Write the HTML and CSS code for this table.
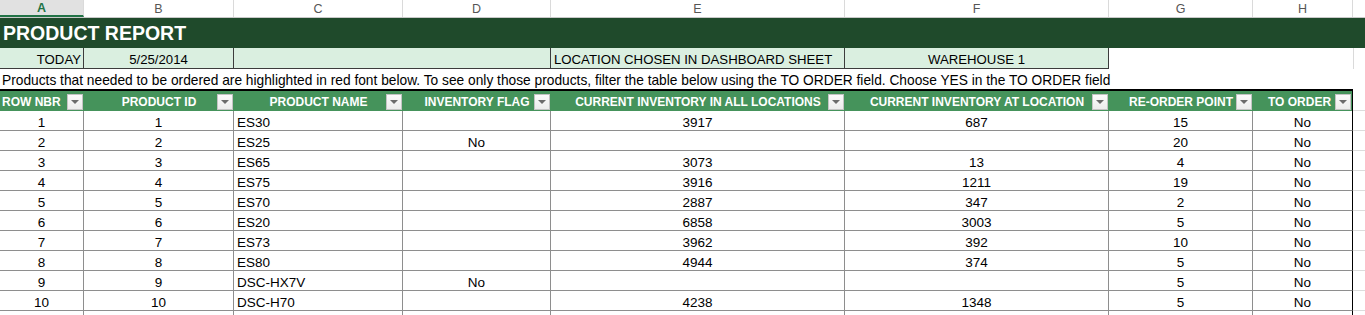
FILE: index.html
```html
<!DOCTYPE html>
<html>
<head>
<meta charset="utf-8">
<link rel="stylesheet" href="styles.css">
</head>
<body>
<div class="sheet">
  <div class="row colhead">
    <div class="ch sel">A</div><div class="ch">B</div><div class="ch">C</div><div class="ch">D</div><div class="ch">E</div><div class="ch">F</div><div class="ch">G</div><div class="ch">H</div><div class="ch gut"></div>
  </div>
  <div class="title">PRODUCT REPORT</div>
  <div class="row info">
    <div class="ic right">TODAY</div>
    <div class="ic center">5/25/2014</div>
    <div class="ic span2"></div>
    <div class="ic left">LOCATION CHOSEN IN DASHBOARD SHEET</div>
    <div class="ic center">WAREHOUSE 1</div>
    <div class="blank"></div><div class="blank"></div><div class="blank gutline"></div>
  </div>
  <div class="note">Products that needed to be ordered are highlighted in red font below. To see only those products, filter the table below using the TO ORDER field. Choose YES in the TO ORDER field</div>
  <div class="row thead">
    <div class="th first">ROW NBR<span class="fb"></span></div>
    <div class="th">PRODUCT ID<span class="fb"></span></div>
    <div class="th">PRODUCT NAME<span class="fb"></span></div>
    <div class="th">INVENTORY FLAG<span class="fb"></span></div>
    <div class="th">CURRENT INVENTORY IN ALL LOCATIONS<span class="fb"></span></div>
    <div class="th">CURRENT INVENTORY AT LOCATION<span class="fb"></span></div>
    <div class="th">RE-ORDER POINT<span class="fb"></span></div>
    <div class="th last">TO ORDER<span class="fb"></span></div>
    <div class="gc"></div>
  </div>
  <div class="row tr"><div class="td">1</div><div class="td">1</div><div class="td l">ES30</div><div class="td"></div><div class="td">3917</div><div class="td">687</div><div class="td">15</div><div class="td last">No</div><div class="gc"></div></div>
  <div class="row tr"><div class="td">2</div><div class="td">2</div><div class="td l">ES25</div><div class="td">No</div><div class="td"></div><div class="td"></div><div class="td">20</div><div class="td last">No</div><div class="gc"></div></div>
  <div class="row tr"><div class="td">3</div><div class="td">3</div><div class="td l">ES65</div><div class="td"></div><div class="td">3073</div><div class="td">13</div><div class="td">4</div><div class="td last">No</div><div class="gc"></div></div>
  <div class="row tr"><div class="td">4</div><div class="td">4</div><div class="td l">ES75</div><div class="td"></div><div class="td">3916</div><div class="td">1211</div><div class="td">19</div><div class="td last">No</div><div class="gc"></div></div>
  <div class="row tr"><div class="td">5</div><div class="td">5</div><div class="td l">ES70</div><div class="td"></div><div class="td">2887</div><div class="td">347</div><div class="td">2</div><div class="td last">No</div><div class="gc"></div></div>
  <div class="row tr"><div class="td">6</div><div class="td">6</div><div class="td l">ES20</div><div class="td"></div><div class="td">6858</div><div class="td">3003</div><div class="td">5</div><div class="td last">No</div><div class="gc"></div></div>
  <div class="row tr"><div class="td">7</div><div class="td">7</div><div class="td l">ES73</div><div class="td"></div><div class="td">3962</div><div class="td">392</div><div class="td">10</div><div class="td last">No</div><div class="gc"></div></div>
  <div class="row tr"><div class="td">8</div><div class="td">8</div><div class="td l">ES80</div><div class="td"></div><div class="td">4944</div><div class="td">374</div><div class="td">5</div><div class="td last">No</div><div class="gc"></div></div>
  <div class="row tr"><div class="td">9</div><div class="td">9</div><div class="td l">DSC-HX7V</div><div class="td">No</div><div class="td"></div><div class="td"></div><div class="td">5</div><div class="td last">No</div><div class="gc"></div></div>
  <div class="row tr"><div class="td">10</div><div class="td">10</div><div class="td l">DSC-H70</div><div class="td"></div><div class="td">4238</div><div class="td">1348</div><div class="td">5</div><div class="td last">No</div><div class="gc"></div></div>
  <div class="row tr"><div class="td"></div><div class="td"></div><div class="td l"></div><div class="td"></div><div class="td"></div><div class="td"></div><div class="td"></div><div class="td last"></div><div class="gc"></div></div>
</div>
</body>
</html>
```
FILE: styles.css
```css
html, body {
  margin: 0;
  padding: 0;
  background: #fff;
}
body {
  font-family: "Liberation Sans", Arial, sans-serif;
  font-size: 13px;
  color: #000;
  width: 1365px;
  height: 315px;
  overflow: hidden;
}
.sheet {
  width: 1365px;
}
.row {
  display: grid;
  grid-template-columns: 84px 150px 169px 148px 294px 264px 144px 100px 1fr;
}
.colhead {
  height: 18px;
  box-sizing: border-box;
  border-bottom: 1px solid #c9c9c9;
}
.ch {
  box-sizing: border-box;
  border-right: 1px solid #dadada;
  display: flex;
  align-items: center;
  justify-content: center;
  font-size: 12.5px;
  color: #555;
}
.ch.sel {
  background: #e1e1e1;
  color: #217346;
  font-weight: bold;
  border-bottom: 2px solid #217346;
}
.ch.gut {
  border-right: none;
}
.title {
  height: 30px;
  background: #1f4a2b;
  color: #fff;
  font-weight: bold;
  font-size: 19.5px;
  padding-left: 3px;
  padding-top: 1px;
  box-sizing: border-box;
  display: flex;
  align-items: center;
}
.info {
  height: 21px;
}
.ic {
  box-sizing: border-box;
  background: #daefe0;
  border-right: 1px solid #3c3c3c;
  border-bottom: 1px solid #3c3c3c;
  display: flex;
  align-items: center;
  white-space: nowrap;
  padding-top: 2px;
  font-size: 13.2px;
}
.ic.right {
  justify-content: flex-end;
  padding-right: 2px;
}
.ic.center {
  justify-content: center;
}
.ic.left {
  padding-left: 3px;
}
.ic.span2 {
  grid-column: span 2;
}
.blank {
  box-sizing: border-box;
}
.blank.gutline {
  border-left: 1px solid #dadada;
}
.note {
  height: 20px;
  padding-left: 2px;
  display: flex;
  align-items: center;
  white-space: nowrap;
  padding-top: 2px;
  box-sizing: border-box;
  font-size: 13.75px;
}
.thead {
  height: 22px;
}
.th {
  position: relative;
  box-sizing: border-box;
  background: #45935b;
  border-top: 2px solid #000;
  color: #fff;
  font-weight: bold;
  font-size: 12px;
  display: flex;
  align-items: center;
  justify-content: center;
  white-space: nowrap;
  padding-top: 1px;
}
.th.first {
  justify-content: flex-start;
  padding-left: 2px;
}
.th.last {
  border-right: 1px solid #000;
  padding-right: 6px;
}
.fb {
  position: absolute;
  right: 1px;
  top: 3px;
  width: 16px;
  height: 16px;
  box-sizing: border-box;
  background: linear-gradient(#fbfbfb, #ececec);
  border: 1px solid #c4c4c4;
  display: flex;
  align-items: center;
  justify-content: center;
}
.fb::after {
  content: "";
  width: 0;
  height: 0;
  border-left: 4px solid transparent;
  border-right: 4px solid transparent;
  border-top: 4px solid #6b6b6b;
}
.tr {
  height: 20px;
}
.td {
  box-sizing: border-box;
  border-right: 1px solid #8e8e8e;
  border-bottom: 1px solid #8e8e8e;
  display: flex;
  align-items: center;
  justify-content: center;
  white-space: nowrap;
  padding-top: 3px;
  font-size: 13.5px;
}
.td.l {
  justify-content: flex-start;
  padding-left: 3px;
}
.td.last {
  border-right: 1px solid #000;
}
.gc {
  box-sizing: border-box;
  border-bottom: 1px solid #dcdcdc;
}
```
